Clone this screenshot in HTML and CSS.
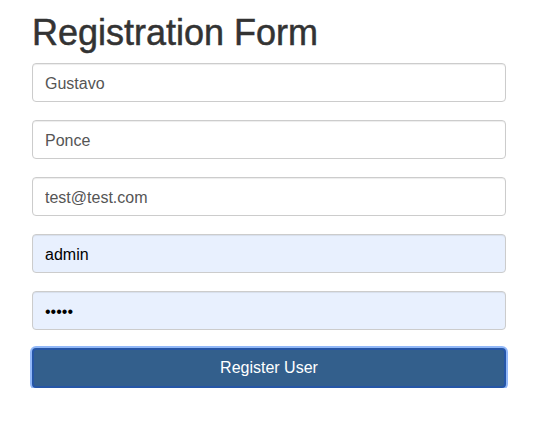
FILE: index.html
```html
<!DOCTYPE html>
<html lang="en">
<head>
<meta charset="utf-8">
<title>Registration Form</title>
<link rel="stylesheet" href="styles.css">
</head>
<body>
<div class="container">
  <h1 class="title">Registration Form</h1>
  <form class="form">
    <input class="field" type="text" value="Gustavo">
    <input class="field" type="text" value="Ponce">
    <input class="field" type="email" value="test@test.com">
    <input class="field field-autofill" type="text" value="admin">
    <input class="field field-autofill" type="password" value="admin">
    <button class="btn-submit" type="button">Register User</button>
  </form>
</div>
</body>
</html>
```

FILE: styles.css
```css
* {
  box-sizing: border-box;
}

html, body {
  margin: 0;
  padding: 0;
  background: #fff;
}

body {
  font-family: "Liberation Sans", Arial, Helvetica, sans-serif;
  font-size: 14px;
  color: #333;
}

.container {
  padding: 13px 0 0 32px;
  width: 506px;
}

.title {
  margin: 0 0 10px;
  font-size: 36px;
  font-weight: 500;
  line-height: 1.1;
  color: #333;
  -webkit-text-stroke: 0.5px #333;
}

.form {
  display: flex;
  flex-direction: column;
  gap: 18px;
}

.field {
  display: block;
  width: 474px;
  height: 39px;
  padding: 8px 12px 5px;
  font-family: "Liberation Sans", Arial, Helvetica, sans-serif;
  font-size: 16px;
  color: #555;
  background: #fff;
  border: 1px solid #ccc;
  border-radius: 4px;
  box-shadow: inset 0 1px 1px rgba(0, 0, 0, 0.075);
  outline: none;
}

.field-autofill {
  background: #e8f0fe;
  color: #000;
}

.btn-submit {
  display: block;
  width: 474px;
  height: 40px;
  padding: 1px 0 0;
  font-family: "Liberation Sans", Arial, Helvetica, sans-serif;
  font-size: 16px;
  color: #fff;
  background: #335f8c;
  border: 2px solid #2656a6;
  border-radius: 4px;
  box-shadow: 0 0 0 2px rgba(110, 160, 245, 0.75);
  cursor: pointer;
}
```
